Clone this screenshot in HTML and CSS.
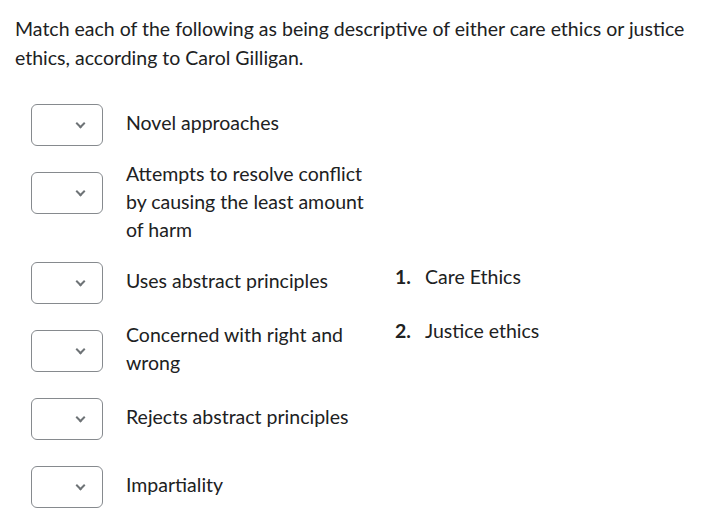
FILE: index.html
```html
<!DOCTYPE html>
<html lang="en">
<head>
  <meta charset="UTF-8" />
  <title>Matching</title>
  <link rel="stylesheet" href="styles.css">
</head>
<body>
  <p class="question">Match each of the following as being descriptive of either care ethics or justice ethics, according to Carol Gilligan.</p>

  <div class="match">
    <div class="choices">
      <div class="row">
        <div class="pick"><span class="chev"></span></div>
        <div class="label">Novel approaches</div>
      </div>
      <div class="row">
        <div class="pick"><span class="chev"></span></div>
        <div class="label">Attempts to resolve conflict by causing the least amount of harm</div>
      </div>
      <div class="row">
        <div class="pick"><span class="chev"></span></div>
        <div class="label">Uses abstract principles</div>
      </div>
      <div class="row">
        <div class="pick"><span class="chev"></span></div>
        <div class="label">Concerned with right and wrong</div>
      </div>
      <div class="row">
        <div class="pick"><span class="chev"></span></div>
        <div class="label">Rejects abstract principles</div>
      </div>
      <div class="row">
        <div class="pick"><span class="chev"></span></div>
        <div class="label">Impartiality</div>
      </div>
    </div>

    <ol class="answers">
      <li><b>1.</b><span>Care Ethics</span></li>
      <li><b>2.</b><span>Justice ethics</span></li>
    </ol>
  </div>
</body>
</html>
```

FILE: styles.css
```css
* { margin: 0; padding: 0; box-sizing: border-box; }

body {
  margin: 0;
  padding: 14px 15px 0 15px;
  font-family: Lato, 'Open Sans', sans-serif;
  font-size: 19.5px;
  color: #202122;
  background: #fff;
}

.question {
  line-height: 29px;
  width: 690px;
}

.match {
  display: flex;
  align-items: center;
  margin-top: 19px;
}

.choices {
  padding-left: 16px;
  width: 380px;
}

.row {
  display: flex;
  align-items: flex-start;
  min-height: 68px;
}

.pick {
  position: relative;
  flex: none;
  width: 72px;
  height: 42px;
  margin-top: 13px;
  border: 1px solid #868a8e;
  border-radius: 6px;
  background: #fff;
}

.chev {
  position: absolute;
  left: 45px;
  top: 15px;
  width: 7px;
  height: 7px;
  border-right: 2px solid #6e7376;
  border-bottom: 2px solid #6e7376;
  transform: rotate(45deg);
}

.label {
  align-self: center;
  width: 250px;
  margin-left: 23px;
  padding: 1px 0 5px;
  line-height: 28px;
}

.answers {
  list-style: none;
  margin-top: -4px;
}

.answers li {
  display: flex;
  line-height: 28px;
  margin-bottom: 26px;
}

.answers li:last-child {
  margin-bottom: 0;
}

.answers b {
  width: 30px;
  font-weight: 700;
}
```
